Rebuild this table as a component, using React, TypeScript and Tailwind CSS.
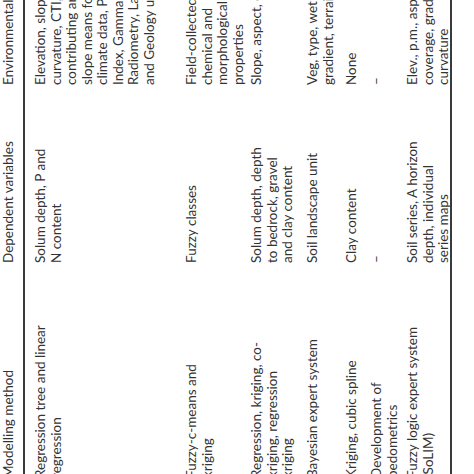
import React from 'react';

type Row = { method: string[]; dependent: string[]; env: string[]; h: string };

const rows: Row[] = [
  {
    method: ['Regression tree and linear', 'regression'],
    dependent: ['Solum depth, P and', 'N content'],
    env: [
      'Elevation, slope, profile',
      'curvature, CTI, upslope',
      'contributing area,',
      'slope means for',
      'climate data, Prescott',
      'Index, Gamma',
      'Radiometry, Landsat',
      'and Geology units',
    ],
    h: 'h-[151px]',
  },
  {
    method: ['Fuzzy-c-means and', 'kriging'],
    dependent: ['Fuzzy classes'],
    env: ['Field-collected', 'chemical and', 'morphological', 'properties'],
    h: 'h-[65px]',
  },
  {
    method: ['Regression, kriging, co-', 'kriging, regression', 'kriging'],
    dependent: ['Solum depth, depth', 'to bedrock, gravel', 'and clay content'],
    env: ['Slope, aspect, elevation'],
    h: 'h-[56px]',
  },
  {
    method: ['Bayesian expert system'],
    dependent: ['Soil landscape unit'],
    env: ['Veg, type, wetness', 'gradient, terrain'],
    h: 'h-[39px]',
  },
  {
    method: ['Kriging, cubic spline'],
    dependent: ['Clay content'],
    env: ['None'],
    h: 'h-[25px]',
  },
  {
    method: ['Development of', 'pedometrics'],
    dependent: ['–'],
    env: ['–'],
    h: 'h-[36px]',
  },
  {
    method: ['Fuzzy logic expert system', '(SoLIM)'],
    dependent: ['Soil series, A horizon', 'depth, individual', 'series maps'],
    env: ['Elev., p.m., aspect,', 'coverage, gradient,', 'curvature'],
    h: 'h-[53px]',
  },
];

function Lines({ items }: { items: string[] }) {
  return (
    <>
      {items.map((t, i) => (
        <div key={i} className="whitespace-nowrap">{t}</div>
      ))}
    </>
  );
}

export default function App() {
  return (
    <div className="w-[474px] h-[474px] overflow-hidden bg-white">
      {/* table is laid out upright, then turned a quarter to the left */}
      <div className="w-[640px] h-[474px] origin-top-left translate-y-[478px] -rotate-90 font-['Lato',sans-serif] text-[13.5px] leading-[15.5px] text-[#333]">
        <div className="flex h-[23px] pt-[1px]">
          <div className="w-[215px] shrink-0 whitespace-nowrap">Modelling method</div>
          <div className="w-[178px] shrink-0 whitespace-nowrap">Dependent variables</div>
          <div className="flex-1 whitespace-nowrap">Environmental variables</div>
        </div>
        <div className="h-[2px] bg-[#3a3a3a]" />
        {rows.map((r, i) => (
          <div key={i} className={`flex pt-[8px] ${r.h}`}>
            <div className="w-[215px] shrink-0"><Lines items={r.method} /></div>
            <div className="w-[178px] shrink-0"><Lines items={r.dependent} /></div>
            <div className="flex-1"><Lines items={r.env} /></div>
          </div>
        ))}
        <div className="h-[2px] bg-[#3a3a3a]" />
      </div>
    </div>
  );
}
